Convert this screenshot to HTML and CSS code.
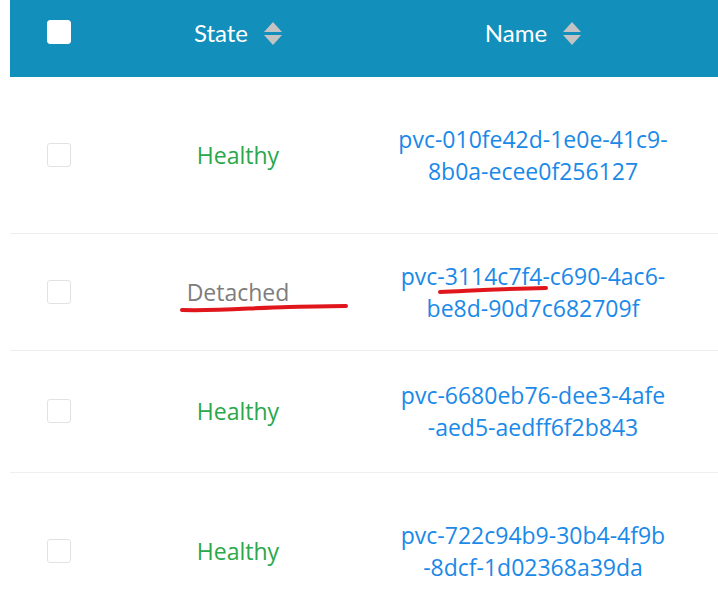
FILE: index.html
```html
<!DOCTYPE html>
<html lang="en">
<head>
  <meta charset="UTF-8" />
  <title>Volumes</title>
  <link rel="stylesheet" href="styles.css">
</head>
<body>
  <table class="vol-table">
    <colgroup>
      <col class="col-check">
      <col class="col-state">
      <col class="col-name">
    </colgroup>
    <thead>
      <tr>
        <th class="cell-check"><span class="box box-head"></span></th>
        <th><span class="th-label">State</span><span class="sorter"><i class="up"></i><i class="down"></i></span></th>
        <th><span class="th-label">Name</span><span class="sorter"><i class="up"></i><i class="down"></i></span></th>
      </tr>
    </thead>
    <tbody>
      <tr class="row-1">
        <td class="cell-check"><span class="box"></span></td>
        <td><span class="state healthy">Healthy</span></td>
        <td><a class="vol-name" href="#">pvc-010fe42d-1e0e-41c9-<br>8b0a-ecee0f256127</a></td>
      </tr>
      <tr class="row-2">
        <td class="cell-check"><span class="box"></span></td>
        <td class="marked">
          <span class="state detached">Detached</span>
          <svg class="ink ink-state" width="170" height="12" viewBox="0 0 170 12"><path d="M3 8 C 40 9, 70 6, 110 5 S 150 4, 167 4" /></svg>
        </td>
        <td class="marked">
          <a class="vol-name" href="#">pvc-3114c7f4-c690-4ac6-<br>be8d-90d7c682709f</a>
          <svg class="ink ink-name" width="112" height="10" viewBox="0 0 112 10"><path d="M3 7 C 30 6, 60 4, 109 3" /></svg>
        </td>
      </tr>
      <tr class="row-3">
        <td class="cell-check"><span class="box"></span></td>
        <td><span class="state healthy">Healthy</span></td>
        <td><a class="vol-name" href="#">pvc-6680eb76-dee3-4afe<br>-aed5-aedff6f2b843</a></td>
      </tr>
      <tr class="row-4">
        <td class="cell-check"><span class="box"></span></td>
        <td><span class="state healthy">Healthy</span></td>
        <td><a class="vol-name" href="#">pvc-722c94b9-30b4-4f9b<br>-8dcf-1d02368a39da</a></td>
      </tr>
    </tbody>
  </table>
</body>
</html>
```

FILE: styles.css
```css
* {
  margin: 0;
  padding: 0;
  box-sizing: border-box;
}
body {
  background: #fff;
  font-family: 'Open Sans', 'Noto Sans', sans-serif;
  overflow: hidden;
}
.vol-table {
  margin-left: 10px;
  width: 708px;
  border-collapse: collapse;
  table-layout: fixed;
}
.col-check { width: 118px; }
.col-state { width: 220px; }
.col-name { width: 370px; }
thead tr {
  background-color: #128fbb;
  height: 77px;
}
th {
  color: #fff;
  font-family: Lato, 'Open Sans', sans-serif;
  font-weight: 400;
  font-size: 24px;
  text-align: center;
  vertical-align: middle;
  white-space: nowrap;
  padding-bottom: 14px;
}
.th-label {
  vertical-align: middle;
}
.sorter {
  display: inline-flex;
  flex-direction: column;
  gap: 3px;
  margin-left: 16px;
  vertical-align: middle;
}
.sorter i {
  display: block;
  width: 0;
  height: 0;
  border-left: 9px solid transparent;
  border-right: 9px solid transparent;
}
.sorter .up { border-bottom: 10px solid #c3c3c3; }
.sorter .down { border-top: 10px solid #c3c3c3; }
.cell-check {
  text-align: left;
  padding-left: 37px;
}
.box {
  display: block;
  width: 24px;
  height: 24px;
  border: 1px solid #e2e2e2;
  border-radius: 3px;
  background: #fff;
}
.box-head {
  border-color: #fff;
}
td {
  text-align: center;
  vertical-align: middle;
  border-top: 1px solid #eeeeee;
  font-size: 23px;
}
tbody tr:first-child td { border-top: none; }
.row-1 { height: 156px; }
.row-2 { height: 117px; }
.row-3 { height: 122px; }
.row-4 { height: 158px; }
.state.healthy { color: #2aa84a; }
.state.detached { color: #7d7d7d; }
.vol-name {
  display: inline-block;
  color: #1a89e8;
  text-decoration: none;
  white-space: nowrap;
  line-height: 32px;
}
.marked {
  position: relative;
}
.ink {
  position: absolute;
  fill: none;
  stroke: #e0161c;
  stroke-width: 4;
  stroke-linecap: round;
}
.ink-state {
  left: 51px;
  top: 68px;
}
.ink-name {
  left: 89px;
  top: 51px;
}
```
